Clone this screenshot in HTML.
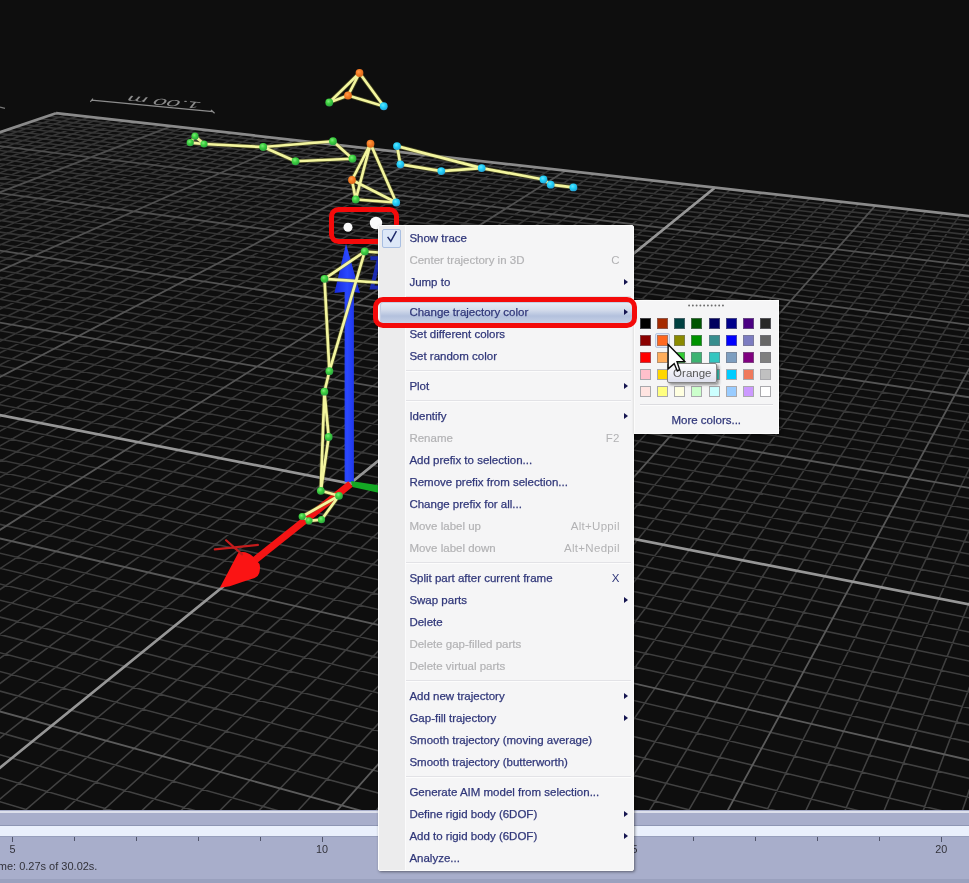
<!DOCTYPE html>
<html><head><meta charset="utf-8"><title>Trajectory menu</title>
<style>
html,body{margin:0;padding:0;background:#0e0e0e;}
body{width:969px;height:883px;position:relative;overflow:hidden;font-family:"Liberation Sans",sans-serif;}
#view{position:absolute;left:0;top:0;width:969px;height:810px;background:#0e0e0e;overflow:hidden;}
#view svg{position:absolute;left:0;top:0;}
#timeline{position:absolute;left:0;top:810px;width:969px;height:73px;background:#a8aecb;}
#timeline .topl{position:absolute;left:0;top:0.5px;width:969px;height:2px;background:#dcdfeb;}
#timeline .track{position:absolute;left:0;top:15px;width:969px;height:10px;background:#eaf0fc;border-top:1px solid #8e96b4;border-bottom:1px solid #979fbc;box-sizing:content-box;}
#timeline .tick{position:absolute;top:26.5px;width:1px;height:4px;background:#50546a;}
#timeline .tick.big{height:5px;}
#timeline .lab{position:absolute;top:32px;width:30px;margin-left:-15px;text-align:center;font-size:10.8px;color:#32323a;line-height:14px;}
#timeline .status{position:absolute;left:-11px;top:49px;font-size:11px;color:#32323a;line-height:14px;white-space:nowrap;}
#timeline .bot{position:absolute;left:0;top:69px;width:969px;height:4px;background:#9aa1be;}
#menu{position:absolute;left:377.6px;top:225px;width:256.2px;height:646px;background:#f5f5f6;box-sizing:border-box;border:1px solid #fbfbfb;border-radius:2px;box-shadow:1px 1px 3px rgba(0,0,0,.45);}
#menu .gutter{position:absolute;left:0;top:0;width:26px;height:100%;background:#ececed;border-right:1px solid #fbfbfc;}
#menu .it,#menu .sc,#timeline .lab,#timeline .status,.gs{opacity:.995;}
#menu .it{position:absolute;left:30.8px;font-size:11.5px;color:#30377a;-webkit-text-stroke:0.25px #30377a;line-height:22px;height:22px;white-space:nowrap;}
#menu .it.dis{color:#b3b3b5;-webkit-text-stroke:0.2px #b3b3b5;}
#menu .sc{position:absolute;right:13px;letter-spacing:0.3px;font-size:11.5px;color:#30377a;line-height:22px;height:22px;white-space:nowrap;text-align:right;}
#menu .sc.dis{color:#b3b3b5;}
#menu .arr{position:absolute;left:245.6px;width:0;height:0;border-left:4px solid #15154f;border-top:3.5px solid transparent;border-bottom:3.5px solid transparent;}
#menu .sep{position:absolute;left:27px;right:2px;height:1px;background:#e2e2e6;border-bottom:1px solid #fcfcfc;}
#menu .hl{position:absolute;left:1px;top:76px;width:253px;height:22px;border-radius:3px;background:linear-gradient(#e6ebf5 0%,#d3dbeb 35%,#b3c1dd 65%,#c6d0e6 100%);border:1px solid #c3cde3;box-sizing:border-box;}
#menu .chk{position:absolute;left:3px;top:3px;width:19px;height:19px;box-sizing:border-box;background:#dde8f8;border:1px solid #a9bfe2;border-radius:2px;}
</style></head><body>
<div id="view">
<svg class="grid" width="969" height="810" viewBox="0 0 969 810" style="filter:blur(0.62px)">
<defs>
<linearGradient id="gmin" gradientUnits="userSpaceOnUse" x1="0" y1="110" x2="0" y2="810"><stop offset="0" stop-color="#353535"/><stop offset="0.3" stop-color="#353535"/><stop offset="1" stop-color="#424242"/></linearGradient>
<linearGradient id="gmaj" gradientUnits="userSpaceOnUse" x1="0" y1="110" x2="0" y2="810"><stop offset="0" stop-color="#4c4c4c"/><stop offset="0.3" stop-color="#545454"/><stop offset="1" stop-color="#5c5c5c"/></linearGradient>
</defs>
<path d="M67.2 114.5 L-2057.7 846.7 M47.9 116.0 L1654.7 298.7 M78.6 115.7 L-2044.3 855.9 M39.7 118.8 L1657.5 304.3 M89.9 117.0 L-2030.8 865.3 M31.4 121.6 L1660.3 310.1 M101.4 118.3 L-2017.0 874.8 M23.0 124.4 L1663.1 315.9 M112.9 119.6 L-2003.1 884.5 M14.4 127.3 L1666.0 321.9 M124.5 120.9 L-1988.9 894.4 M5.8 130.3 L1669.0 327.9 M136.2 122.3 L-1974.4 904.4 M-2.9 133.3 L1672.0 334.1 M148.0 123.6 L-1959.7 914.6 M-11.8 136.3 L1675.0 340.4 M159.8 124.9 L-1944.8 925.0 M-20.7 139.3 L1678.1 346.8 M183.6 127.6 L-1914.2 946.2 M-39.0 145.6 L1684.6 360.0 M195.7 129.0 L-1898.5 957.1 M-48.4 148.7 L1687.9 366.8 M207.8 130.3 L-1882.5 968.2 M-57.8 152.0 L1691.3 373.8 M220.0 131.7 L-1866.2 979.5 M-67.4 155.2 L1694.7 380.8 M232.2 133.1 L-1849.7 991.0 M-77.1 158.5 L1698.2 388.0 M244.5 134.5 L-1832.8 1002.7 M-87.0 161.9 L1701.8 395.4 M257.0 135.9 L-1815.6 1014.6 M-97.0 165.3 L1705.5 402.9 M269.5 137.3 L-1798.2 1026.7 M-107.1 168.7 L1709.2 410.6 M282.0 138.7 L-1780.4 1039.1 M-117.4 172.2 L1713.0 418.4 M307.4 141.6 L-1743.8 1064.5 M-138.3 179.4 L1720.9 434.6 M320.2 143.0 L-1725.0 1077.5 M-149.1 183.0 L1725.0 443.0 M333.1 144.5 L-1705.8 1090.8 M-159.9 186.7 L1729.1 451.5 M346.1 145.9 L-1686.2 1104.4 M-171.0 190.5 L1733.4 460.3 M359.1 147.4 L-1666.3 1118.2 M-182.2 194.3 L1737.7 469.2 M372.3 148.9 L-1646.0 1132.3 M-193.5 198.2 L1742.2 478.4 M385.5 150.4 L-1625.3 1146.7 M-205.1 202.1 L1746.7 487.7 M398.8 151.9 L-1604.1 1161.4 M-216.8 206.1 L1751.4 497.3 M412.2 153.4 L-1582.6 1176.3 M-228.7 210.1 L1756.2 507.1 M439.2 156.4 L-1538.1 1207.2 M-253.0 218.4 L1766.1 527.4 M452.9 158.0 L-1515.1 1223.1 M-265.4 222.7 L1771.2 538.0 M466.7 159.5 L-1491.7 1239.4 M-278.0 227.0 L1776.4 548.8 M480.5 161.1 L-1467.8 1256.0 M-290.9 231.3 L1781.8 559.8 M494.4 162.6 L-1443.3 1272.9 M-303.9 235.8 L1787.4 571.2 M508.5 164.2 L-1418.4 1290.3 M-317.2 240.3 L1793.0 582.8 M522.6 165.8 L-1392.8 1308.0 M-330.6 244.9 L1798.8 594.8 M536.8 167.4 L-1366.7 1326.1 M-344.3 249.5 L1804.8 607.1 M551.1 169.0 L-1340.1 1344.6 M-358.2 254.3 L1811.0 619.7 M580.0 172.3 L-1284.8 1382.9 M-386.7 264.0 L1823.7 645.9 M594.6 173.9 L-1256.3 1402.7 M-401.3 269.0 L1830.4 659.6 M609.3 175.6 L-1227.0 1423.0 M-416.2 274.0 L1837.3 673.7 M624.1 177.3 L-1197.0 1443.8 M-431.3 279.2 L1844.3 688.2 M639.0 178.9 L-1166.4 1465.1 M-446.7 284.4 L1851.6 703.1 M654.0 180.6 L-1134.9 1486.9 M-462.3 289.7 L1859.0 718.4 M669.1 182.3 L-1102.7 1509.3 M-478.2 295.2 L1866.7 734.2 M684.3 184.1 L-1069.7 1532.2 M-494.4 300.7 L1874.7 750.5 M699.6 185.8 L-1035.8 1555.7 M-510.9 306.3 L1882.8 767.3 M730.6 189.3 L-965.4 1604.5 M-544.8 317.8 L1900.0 802.6 M746.2 191.0 L-928.9 1629.9 M-562.2 323.8 L1909.0 821.1 M762.0 192.8 L-891.3 1656.0 M-580.0 329.8 L1918.3 840.2 M777.8 194.6 L-852.7 1682.8 M-598.0 335.9 L1927.9 859.9 M793.8 196.4 L-813.0 1710.3 M-616.4 342.2 L1937.8 880.3 M809.9 198.2 L-772.3 1738.6 M-635.2 348.6 L1948.1 901.5 M826.1 200.0 L-730.3 1767.7 M-654.3 355.1 L1958.8 923.3 M842.4 201.9 L-687.2 1797.6 M-673.8 361.8 L1969.8 946.0 M858.9 203.7 L-642.8 1828.4 M-693.7 368.5 L1981.3 969.6 M892.1 207.5 L-550.1 1892.8 M-734.6 382.5 L2005.5 1019.3 M908.9 209.4 L-501.6 1926.4 M-755.7 389.6 L2018.3 1045.6 M925.8 211.3 L-451.5 1961.1 M-777.2 397.0 L2031.6 1073.0 M942.8 213.2 L-400.0 1996.9 M-799.2 404.5 L2045.5 1101.5 M960.0 215.1 L-346.7 2033.9 M-821.6 412.1 L2060.0 1131.2 M977.3 217.1 L-291.8 2072.0 M-844.5 419.9 L2075.0 1162.2 M994.7 219.1 L-235.0 2111.4 M-867.9 427.9 L2090.7 1194.4 M1012.3 221.0 L-176.3 2152.1 M-891.8 436.0 L2107.2 1228.2 M1030.0 223.0 L-115.6 2194.3 M-916.2 444.3 L2124.3 1263.4 M1065.7 227.1 L12.2 2283.0 M-966.6 461.5 L2161.1 1338.9 M1083.8 229.1 L79.6 2329.7 M-992.7 470.4 L2180.8 1379.4 M1102.0 231.2 L149.4 2378.2 M-1019.3 479.5 L2201.5 1421.9 M1120.4 233.2 L221.9 2428.4 M-1046.6 488.7 L2223.2 1466.6 M1138.9 235.3 L297.1 2480.6 M-1074.5 498.3 L2246.1 1513.7 M1157.5 237.4 L375.2 2534.8 M-1103.1 508.0 L2270.3 1563.2 M1176.3 239.5 L456.4 2591.1 M-1132.4 517.9 L2295.7 1615.5 M1195.2 241.7 L540.9 2649.8 M-1162.3 528.2 L2322.6 1670.8 M1214.3 243.8 L628.8 2710.8 M-1193.0 538.6 L2351.1 1729.4 M1252.9 248.2 L816.1 2840.8 M-1256.7 560.3 L2413.4 1857.3 M1272.4 250.4 L915.9 2910.0 M-1289.8 571.6 L2447.6 1927.5 M1292.1 252.6 L1020.2 2982.4 M-1323.7 583.1 L2484.0 2002.3 M1311.9 254.8 L1129.2 3058.0 M-1358.5 595.0 L2522.9 2082.3 M1331.9 257.1 L1243.4 3137.3 M-1394.2 607.1 L2564.6 2167.9 M1352.1 259.4 L1363.1 3220.3 M-1430.9 619.6 L2609.3 2259.8 M1372.4 261.6 L1488.7 3307.5 M-1468.5 632.4 L2657.5 2358.8 M1392.9 264.0 L1620.6 3399.0 M-1507.2 645.6 L2709.5 2465.7 M1413.5 266.3 L1759.4 3495.3 M-1547.0 659.2 L2765.9 2581.4 M1455.3 271.0 L2059.8 3703.8 M-1630.0 687.4 L2893.8 2844.1 M1476.4 273.4 L2222.6 3816.8 M-1673.3 702.2 L2966.8 2994.1 M1497.8 275.8 L2394.9 3936.3 M-1717.8 717.3 L3047.0 3159.0 M1519.3 278.2 L2577.5 4063.0 M-1763.7 733.0 L3135.7 3341.2 M1540.9 280.6 L2771.2 4197.4 M-1811.0 749.1 L3234.1 3543.4 M1562.8 283.1 L2977.3 4340.4 M-1859.7 765.7 L3344.1 3769.2 M1584.8 285.6 L3196.8 4492.7 M-1910.0 782.8 L3467.6 4023.0 M1607.0 288.1 L3431.2 4655.4 M-1961.9 800.5 L3607.5 4310.3 M1629.4 290.6 L3682.0 4829.4 M-2015.4 818.7 L3767.1 4638.2" stroke="url(#gmin)" stroke-width="1.55" fill="none"/>
<path d="M171.7 126.2 L-1929.6 935.5 M-29.8 142.4 L1681.3 353.4 M294.7 140.1 L-1762.2 1051.6 M-127.8 175.8 L1716.9 426.5 M425.7 154.9 L-1560.5 1191.6 M-240.7 214.2 L1761.0 517.1 M565.5 170.7 L-1312.8 1363.5 M-372.3 259.1 L1817.3 632.6 M875.4 205.6 L-597.1 1860.1 M-713.9 375.4 L1993.2 994.0 M1047.8 225.0 L-52.8 2237.8 M-941.1 452.8 L2142.3 1300.3 M1233.5 246.0 L720.5 2774.4 M-1224.5 549.3 L2381.3 1791.4 M1434.3 268.6 L1905.6 3596.8 M-1587.9 673.1 L2827.0 2707.0" stroke="url(#gmaj)" stroke-width="1.8" fill="none"/>
<path d="M715.1 187.5 L-1001.1 1579.8 M-527.7 312.0 L1891.3 784.7" stroke="#969696" stroke-width="2.7" fill="none"/>
<path d="M56.0 113.2 L-2070.8 837.6 M56.0 113.2 L1652.0 293.2 M1652.0 293.2 L3951.0 5016.1 M-2070.8 837.6 L3951.0 5016.1" stroke="#8a8a8a" stroke-width="2.7" fill="none"/>
</svg>
<svg width="969" height="810" viewBox="0 0 969 810">
<defs>
<radialGradient id="rgo" cx="0.4" cy="0.35" r="0.7"><stop offset="0" stop-color="#ff9c4c"/><stop offset="0.45" stop-color="#f57c24"/><stop offset="1" stop-color="#d4651c"/></radialGradient>
<radialGradient id="rgg" cx="0.4" cy="0.35" r="0.7"><stop offset="0" stop-color="#7cec7c"/><stop offset="0.45" stop-color="#3dd03d"/><stop offset="1" stop-color="#2a9c42"/></radialGradient>
<radialGradient id="rgc" cx="0.4" cy="0.35" r="0.7"><stop offset="0" stop-color="#66e4ff"/><stop offset="0.45" stop-color="#1fd0f8"/><stop offset="1" stop-color="#279cd0"/></radialGradient>
<linearGradient id="zb" x1="0" x2="1" y1="0" y2="0"><stop offset="0" stop-color="#1528d8"/><stop offset="0.5" stop-color="#2a48ff"/><stop offset="1" stop-color="#1528d8"/></linearGradient>
</defs>
<g stroke="#8c8c8c" stroke-width="1.2" fill="none"><path d="M91.5 100.2 L212.9 111.7 M90.3 101.8 L93 98.6 M211 110 L214.6 113.2"/></g>
<text transform="translate(202.5 102.6) rotate(185.4) scale(1 0.39) skewX(-15)" font-family="Liberation Sans, sans-serif" font-size="24" fill="#8c8c8c" opacity="0.99">1.00 m</text>
<path d="M0 107.2 L5 108.3" stroke="#777" stroke-width="1.2"/>
<path d="M344.6 482 L344.6 292 L334.4 293 L346 243.8 L360 293 L353.9 292 L353.9 482 Z" fill="url(#zb)"/>
<path d="M370.3 258.2 L379 258.2 L372 287.5 L381 287.5" stroke="#1b2cc2" stroke-width="4" fill="none" opacity="0.9"/>
<path d="M351 481 L400 488.4 L400 497.4 L352.3 487 Z" fill="#14a824"/>
<path d="M348.3 481.2 L352.7 486.8 L254.2 565.3 L249.8 559.7 Z" fill="#f41414"/>
<path d="M238 553.2 L219.9 587.8 L229.8 586.2 L242.2 582 L254.6 577.9 Q258.5 576 259.3 572.9 Q260.6 568 259.5 564 L253 556.5 Q245 549.5 238 553.2 Z" fill="#fb1414"/>
<g stroke="#c41c1c" stroke-width="2.2" fill="none" stroke-linecap="round"><path d="M214.8 549.4 L257.9 544.9 M226.1 540.3 L242 554.4"/></g>
<g stroke="#7a7a30" stroke-width="4.2" stroke-linecap="round" fill="none" opacity="0.5">
<path d="M359.5 73 L329.25 102.5"/>
<path d="M359.5 73 L348 95.5"/>
<path d="M359.5 73 L383.75 106.25"/>
<path d="M329.25 102.5 L348 95.5"/>
<path d="M348 95.5 L383.75 106.25"/>
<path d="M195 136.2 L204 144"/>
<path d="M190.2 142.7 L204 144"/>
<path d="M195 136.2 L190.2 142.7"/>
<path d="M204 144 L263.25 147"/>
<path d="M263.25 147 L333 141.25"/>
<path d="M263.25 147 L295.5 161.25"/>
<path d="M295.5 161.25 L352.5 158.75"/>
<path d="M333 141.25 L352.5 158.75"/>
<path d="M370.5 143.75 L352 180"/>
<path d="M370.5 143.75 L355.75 199.5"/>
<path d="M370.5 143.75 L396.25 202.5"/>
<path d="M352 180 L396.25 202.5"/>
<path d="M355.75 199.5 L396.25 202.5"/>
<path d="M352 180 L355.75 199.5"/>
<path d="M397 146.1 L481.7 168.1"/>
<path d="M397 146.1 L400.4 164.3"/>
<path d="M400.4 164.3 L441.3 171.1"/>
<path d="M441.3 171.1 L481.7 168.1"/>
<path d="M481.7 168.1 L543.5 179.5"/>
<path d="M543.5 179.5 L550.7 184.7"/>
<path d="M550.7 184.7 L573.4 187.4"/>
<path d="M364.8 251.5 L324.5 278.8"/>
<path d="M324.5 278.8 L400 284"/>
<path d="M364.8 251.5 L400 254"/>
<path d="M364.8 251.5 L329.4 371.2"/>
<path d="M324.5 278.8 L329.4 371.2"/>
<path d="M329.4 371.2 L324.4 391.7"/>
<path d="M324.4 391.7 L320.8 490.8"/>
<path d="M324.4 391.7 L328.7 437"/>
<path d="M328.7 437 L320.8 490.8"/>
<path d="M320.8 490.8 L339 495.8"/>
<path d="M339 495.8 L302.2 516.5"/>
<path d="M339 495.8 L321.5 519.7"/>
<path d="M302.2 516.5 L309 520.8"/>
<path d="M309 520.8 L321.5 519.7"/>
</g>
<g stroke="#f3f59e" stroke-width="2.7" stroke-linecap="round" fill="none">
<path d="M359.5 73 L329.25 102.5"/>
<path d="M359.5 73 L348 95.5"/>
<path d="M359.5 73 L383.75 106.25"/>
<path d="M329.25 102.5 L348 95.5"/>
<path d="M348 95.5 L383.75 106.25"/>
<path d="M195 136.2 L204 144"/>
<path d="M190.2 142.7 L204 144"/>
<path d="M195 136.2 L190.2 142.7"/>
<path d="M204 144 L263.25 147"/>
<path d="M263.25 147 L333 141.25"/>
<path d="M263.25 147 L295.5 161.25"/>
<path d="M295.5 161.25 L352.5 158.75"/>
<path d="M333 141.25 L352.5 158.75"/>
<path d="M370.5 143.75 L352 180"/>
<path d="M370.5 143.75 L355.75 199.5"/>
<path d="M370.5 143.75 L396.25 202.5"/>
<path d="M352 180 L396.25 202.5"/>
<path d="M355.75 199.5 L396.25 202.5"/>
<path d="M352 180 L355.75 199.5"/>
<path d="M397 146.1 L481.7 168.1"/>
<path d="M397 146.1 L400.4 164.3"/>
<path d="M400.4 164.3 L441.3 171.1"/>
<path d="M441.3 171.1 L481.7 168.1"/>
<path d="M481.7 168.1 L543.5 179.5"/>
<path d="M543.5 179.5 L550.7 184.7"/>
<path d="M550.7 184.7 L573.4 187.4"/>
<path d="M364.8 251.5 L324.5 278.8"/>
<path d="M324.5 278.8 L400 284"/>
<path d="M364.8 251.5 L400 254"/>
<path d="M364.8 251.5 L329.4 371.2"/>
<path d="M324.5 278.8 L329.4 371.2"/>
<path d="M329.4 371.2 L324.4 391.7"/>
<path d="M324.4 391.7 L320.8 490.8"/>
<path d="M324.4 391.7 L328.7 437"/>
<path d="M328.7 437 L320.8 490.8"/>
<path d="M320.8 490.8 L339 495.8"/>
<path d="M339 495.8 L302.2 516.5"/>
<path d="M339 495.8 L321.5 519.7"/>
<path d="M302.2 516.5 L309 520.8"/>
<path d="M309 520.8 L321.5 519.7"/>
</g>
<circle cx="359.5" cy="73" r="3.9" fill="url(#rgo)"/>
<circle cx="348" cy="95.5" r="3.9" fill="url(#rgo)"/>
<circle cx="329.25" cy="102.5" r="3.9" fill="url(#rgg)"/>
<circle cx="383.75" cy="106.25" r="3.9" fill="url(#rgc)"/>
<circle cx="195" cy="136.2" r="3.6" fill="url(#rgg)"/>
<circle cx="190.2" cy="142.7" r="3.6" fill="url(#rgg)"/>
<circle cx="204" cy="144" r="3.6" fill="url(#rgg)"/>
<circle cx="263.25" cy="147" r="3.9" fill="url(#rgg)"/>
<circle cx="295.5" cy="161.25" r="3.9" fill="url(#rgg)"/>
<circle cx="333" cy="141.25" r="3.9" fill="url(#rgg)"/>
<circle cx="352.5" cy="158.75" r="3.9" fill="url(#rgg)"/>
<circle cx="370.5" cy="143.75" r="3.9" fill="url(#rgo)"/>
<circle cx="352" cy="180" r="3.9" fill="url(#rgo)"/>
<circle cx="355.75" cy="199.5" r="3.9" fill="url(#rgg)"/>
<circle cx="396.25" cy="202.5" r="3.9" fill="url(#rgc)"/>
<circle cx="397" cy="146.1" r="3.9" fill="url(#rgc)"/>
<circle cx="400.4" cy="164.3" r="3.9" fill="url(#rgc)"/>
<circle cx="441.3" cy="171.1" r="3.9" fill="url(#rgc)"/>
<circle cx="481.7" cy="168.1" r="3.9" fill="url(#rgc)"/>
<circle cx="543.5" cy="179.5" r="3.9" fill="url(#rgc)"/>
<circle cx="550.7" cy="184.7" r="3.9" fill="url(#rgc)"/>
<circle cx="573.4" cy="187.4" r="3.9" fill="url(#rgc)"/>
<circle cx="364.8" cy="251.5" r="3.9" fill="url(#rgg)"/>
<circle cx="324.5" cy="278.8" r="3.9" fill="url(#rgg)"/>
<circle cx="329.4" cy="371.2" r="3.9" fill="url(#rgg)"/>
<circle cx="324.4" cy="391.7" r="3.9" fill="url(#rgg)"/>
<circle cx="328.7" cy="437" r="3.9" fill="url(#rgg)"/>
<circle cx="320.8" cy="490.8" r="3.9" fill="url(#rgg)"/>
<circle cx="339" cy="495.8" r="3.9" fill="url(#rgg)"/>
<circle cx="302.2" cy="516.5" r="3.6" fill="url(#rgg)"/>
<circle cx="309" cy="520.8" r="3.6" fill="url(#rgg)"/>
<circle cx="321.5" cy="519.7" r="3.6" fill="url(#rgg)"/>
<circle cx="348" cy="227.2" r="4.5" fill="#fafafa"/><circle cx="376" cy="223" r="6.2" fill="#fafafa"/>
</svg>
</div>
<div id="timeline">
<div class="topl"></div><div class="track"></div><div class="bot"></div>
<div class="tick big" style="left:11.9px"></div>
<div class="lab" style="left:12.4px">5</div>
<div class="tick" style="left:73.8px"></div>
<div class="tick" style="left:135.7px"></div>
<div class="tick" style="left:197.7px"></div>
<div class="tick" style="left:259.6px"></div>
<div class="tick big" style="left:321.5px"></div>
<div class="lab" style="left:322.0px">10</div>
<div class="tick" style="left:383.4px"></div>
<div class="tick" style="left:445.3px"></div>
<div class="tick" style="left:507.3px"></div>
<div class="tick" style="left:569.2px"></div>
<div class="tick big" style="left:631.1px"></div>
<div class="lab" style="left:631.6px">15</div>
<div class="tick" style="left:693.0px"></div>
<div class="tick" style="left:754.9px"></div>
<div class="tick" style="left:816.9px"></div>
<div class="tick" style="left:878.8px"></div>
<div class="tick big" style="left:940.7px"></div>
<div class="lab" style="left:941.2px">20</div>
<div class="status">Time: 0.27s of 30.02s.</div>
</div>
<div style="position:absolute;left:329px;top:207px;width:70px;height:37px;box-sizing:border-box;border:5.6px solid #f40a0a;border-radius:9.5px;"></div>
<div id="red2" style="position:absolute;left:373px;top:297px;width:264px;height:31px;box-sizing:border-box;border:5px solid #f40a0a;border-radius:10px;z-index:5;"></div>
<div id="menu">
<div class="gutter"></div>
<div class="hl"></div>
<div class="chk"><svg width="17" height="17" viewBox="0 0 17 17"><path d="M4.6 6.9 L7.8 11.3 L13.4 1.2" stroke="#1f2a6a" stroke-width="1.45" fill="none"/></svg></div>
<div class="it" style="top:1px">Show trace</div>
<div class="it dis" style="top:23px">Center trajectory in 3D</div>
<div class="sc dis" style="top:23px">C</div>
<div class="it" style="top:45px">Jump to</div>
<div class="arr" style="top:52.5px"></div>
<div class="it" style="top:75px">Change trajectory color</div>
<div class="arr" style="top:82.5px"></div>
<div class="it" style="top:97px">Set different colors</div>
<div class="it" style="top:119px">Set random color</div>
<div class="it" style="top:149px">Plot</div>
<div class="arr" style="top:156.5px"></div>
<div class="it" style="top:179px">Identify</div>
<div class="arr" style="top:186.5px"></div>
<div class="it dis" style="top:201px">Rename</div>
<div class="sc dis" style="top:201px">F2</div>
<div class="it" style="top:223px">Add prefix to selection...</div>
<div class="it" style="top:245px">Remove prefix from selection...</div>
<div class="it" style="top:267px">Change prefix for all...</div>
<div class="it dis" style="top:289px">Move label up</div>
<div class="sc dis" style="top:289px">Alt+Uppil</div>
<div class="it dis" style="top:311px">Move label down</div>
<div class="sc dis" style="top:311px">Alt+Nedpil</div>
<div class="it" style="top:341px">Split part after current frame</div>
<div class="sc" style="top:341px">X</div>
<div class="it" style="top:363px">Swap parts</div>
<div class="arr" style="top:370.5px"></div>
<div class="it" style="top:385px">Delete</div>
<div class="it dis" style="top:407px">Delete gap-filled parts</div>
<div class="it dis" style="top:429px">Delete virtual parts</div>
<div class="it" style="top:459px">Add new trajectory</div>
<div class="arr" style="top:466.5px"></div>
<div class="it" style="top:481px">Gap-fill trajectory</div>
<div class="arr" style="top:488.5px"></div>
<div class="it" style="top:503px">Smooth trajectory (moving average)</div>
<div class="it" style="top:525px">Smooth trajectory (butterworth)</div>
<div class="it" style="top:555px">Generate AIM model from selection...</div>
<div class="it" style="top:577px">Define rigid body (6DOF)</div>
<div class="arr" style="top:584.5px"></div>
<div class="it" style="top:599px">Add to rigid body (6DOF)</div>
<div class="arr" style="top:606.5px"></div>
<div class="it" style="top:621px">Analyze...</div>
<div class="sep" style="top:70px"></div>
<div class="sep" style="top:144px"></div>
<div class="sep" style="top:174px"></div>
<div class="sep" style="top:336px"></div>
<div class="sep" style="top:454px"></div>
<div class="sep" style="top:550px"></div>
</div>
<div id="pal" style="position:absolute;left:633.5px;top:299.5px;width:145.5px;height:134.5px;background:#f5f5f6;box-sizing:border-box;border:1px solid #fcfcfc;box-shadow:1px 1px 3px rgba(0,0,0,.5);z-index:3;">
<svg style="position:absolute;left:0;top:0" width="143" height="12" fill="#6c6c6c"><circle cx="54.10" cy="4.50" r="0.95"/><circle cx="57.86" cy="4.50" r="0.95"/><circle cx="61.62" cy="4.50" r="0.95"/><circle cx="65.38" cy="4.50" r="0.95"/><circle cx="69.14" cy="4.50" r="0.95"/><circle cx="72.90" cy="4.50" r="0.95"/><circle cx="76.66" cy="4.50" r="0.95"/><circle cx="80.42" cy="4.50" r="0.95"/><circle cx="84.18" cy="4.50" r="0.95"/><circle cx="87.94" cy="4.50" r="0.95"/></svg>
<div style="position:absolute;left:5.90px;top:17.00px;width:11px;height:11px;box-sizing:border-box;background:#000000;border:1px solid rgba(120,120,130,.55);"></div>
<div style="position:absolute;left:22.93px;top:17.00px;width:11px;height:11px;box-sizing:border-box;background:#A52A00;border:1px solid rgba(120,120,130,.55);"></div>
<div style="position:absolute;left:39.96px;top:17.00px;width:11px;height:11px;box-sizing:border-box;background:#004040;border:1px solid rgba(120,120,130,.55);"></div>
<div style="position:absolute;left:56.99px;top:17.00px;width:11px;height:11px;box-sizing:border-box;background:#005500;border:1px solid rgba(120,120,130,.55);"></div>
<div style="position:absolute;left:74.02px;top:17.00px;width:11px;height:11px;box-sizing:border-box;background:#00005E;border:1px solid rgba(120,120,130,.55);"></div>
<div style="position:absolute;left:91.05px;top:17.00px;width:11px;height:11px;box-sizing:border-box;background:#00008B;border:1px solid rgba(120,120,130,.55);"></div>
<div style="position:absolute;left:108.08px;top:17.00px;width:11px;height:11px;box-sizing:border-box;background:#4B0082;border:1px solid rgba(120,120,130,.55);"></div>
<div style="position:absolute;left:125.11px;top:17.00px;width:11px;height:11px;box-sizing:border-box;background:#282828;border:1px solid rgba(120,120,130,.55);"></div>
<div style="position:absolute;left:5.90px;top:34.03px;width:11px;height:11px;box-sizing:border-box;background:#8B0000;border:1px solid rgba(120,120,130,.55);"></div>
<div style="position:absolute;left:20.93px;top:32.03px;width:15px;height:15px;box-sizing:border-box;background:#dfe7f5;border:1px solid #b9c8e4;border-radius:2px;"></div>
<div style="position:absolute;left:22.93px;top:34.03px;width:11px;height:11px;box-sizing:border-box;background:#FF6820;border:1px solid rgba(120,120,130,.55);"></div>
<div style="position:absolute;left:39.96px;top:34.03px;width:11px;height:11px;box-sizing:border-box;background:#8B8B00;border:1px solid rgba(120,120,130,.55);"></div>
<div style="position:absolute;left:56.99px;top:34.03px;width:11px;height:11px;box-sizing:border-box;background:#009300;border:1px solid rgba(120,120,130,.55);"></div>
<div style="position:absolute;left:74.02px;top:34.03px;width:11px;height:11px;box-sizing:border-box;background:#388E8E;border:1px solid rgba(120,120,130,.55);"></div>
<div style="position:absolute;left:91.05px;top:34.03px;width:11px;height:11px;box-sizing:border-box;background:#0000FF;border:1px solid rgba(120,120,130,.55);"></div>
<div style="position:absolute;left:108.08px;top:34.03px;width:11px;height:11px;box-sizing:border-box;background:#7B7BC0;border:1px solid rgba(120,120,130,.55);"></div>
<div style="position:absolute;left:125.11px;top:34.03px;width:11px;height:11px;box-sizing:border-box;background:#666666;border:1px solid rgba(120,120,130,.55);"></div>
<div style="position:absolute;left:5.90px;top:51.06px;width:11px;height:11px;box-sizing:border-box;background:#FF0000;border:1px solid rgba(120,120,130,.55);"></div>
<div style="position:absolute;left:22.93px;top:51.06px;width:11px;height:11px;box-sizing:border-box;background:#FFAD5B;border:1px solid rgba(120,120,130,.55);"></div>
<div style="position:absolute;left:39.96px;top:51.06px;width:11px;height:11px;box-sizing:border-box;background:#32CD32;border:1px solid rgba(120,120,130,.55);"></div>
<div style="position:absolute;left:56.99px;top:51.06px;width:11px;height:11px;box-sizing:border-box;background:#3CB371;border:1px solid rgba(120,120,130,.55);"></div>
<div style="position:absolute;left:74.02px;top:51.06px;width:11px;height:11px;box-sizing:border-box;background:#34C6C0;border:1px solid rgba(120,120,130,.55);"></div>
<div style="position:absolute;left:91.05px;top:51.06px;width:11px;height:11px;box-sizing:border-box;background:#7D9EC0;border:1px solid rgba(120,120,130,.55);"></div>
<div style="position:absolute;left:108.08px;top:51.06px;width:11px;height:11px;box-sizing:border-box;background:#800080;border:1px solid rgba(120,120,130,.55);"></div>
<div style="position:absolute;left:125.11px;top:51.06px;width:11px;height:11px;box-sizing:border-box;background:#7F7F7F;border:1px solid rgba(120,120,130,.55);"></div>
<div style="position:absolute;left:5.90px;top:68.09px;width:11px;height:11px;box-sizing:border-box;background:#FFC0CB;border:1px solid #a9a9ad;"></div>
<div style="position:absolute;left:22.93px;top:68.09px;width:11px;height:11px;box-sizing:border-box;background:#FFD700;border:1px solid #a9a9ad;"></div>
<div style="position:absolute;left:39.96px;top:68.09px;width:11px;height:11px;box-sizing:border-box;background:#FFFF00;border:1px solid #a9a9ad;"></div>
<div style="position:absolute;left:56.99px;top:68.09px;width:11px;height:11px;box-sizing:border-box;background:#00FF00;border:1px solid #a9a9ad;"></div>
<div style="position:absolute;left:74.02px;top:68.09px;width:11px;height:11px;box-sizing:border-box;background:#40E0D0;border:1px solid #a9a9ad;"></div>
<div style="position:absolute;left:91.05px;top:68.09px;width:11px;height:11px;box-sizing:border-box;background:#00CCFF;border:1px solid #a9a9ad;"></div>
<div style="position:absolute;left:108.08px;top:68.09px;width:11px;height:11px;box-sizing:border-box;background:#F07A5C;border:1px solid #a9a9ad;"></div>
<div style="position:absolute;left:125.11px;top:68.09px;width:11px;height:11px;box-sizing:border-box;background:#C0C0C0;border:1px solid #a9a9ad;"></div>
<div style="position:absolute;left:5.90px;top:85.12px;width:11px;height:11px;box-sizing:border-box;background:#FFE4E1;border:1px solid #a9a9ad;"></div>
<div style="position:absolute;left:22.93px;top:85.12px;width:11px;height:11px;box-sizing:border-box;background:#FFFF80;border:1px solid #a9a9ad;"></div>
<div style="position:absolute;left:39.96px;top:85.12px;width:11px;height:11px;box-sizing:border-box;background:#FFFFE0;border:1px solid #a9a9ad;"></div>
<div style="position:absolute;left:56.99px;top:85.12px;width:11px;height:11px;box-sizing:border-box;background:#CCFFCC;border:1px solid #a9a9ad;"></div>
<div style="position:absolute;left:74.02px;top:85.12px;width:11px;height:11px;box-sizing:border-box;background:#CCFFFF;border:1px solid #a9a9ad;"></div>
<div style="position:absolute;left:91.05px;top:85.12px;width:11px;height:11px;box-sizing:border-box;background:#99CCFF;border:1px solid #a9a9ad;"></div>
<div style="position:absolute;left:108.08px;top:85.12px;width:11px;height:11px;box-sizing:border-box;background:#CC99FF;border:1px solid #a9a9ad;"></div>
<div style="position:absolute;left:125.11px;top:85.12px;width:11px;height:11px;box-sizing:border-box;background:#FFFFFF;border:1px solid #a9a9ad;"></div>
<div style="position:absolute;left:5px;right:5px;top:103.9px;height:1px;background:#dcdce0;border-bottom:1px solid #fcfcfc"></div>
<div style="position:absolute;left:0;width:100%;top:108.3px;height:22px;line-height:22px;text-align:center;font-size:11.5px;color:#30377a;-webkit-text-stroke:0.25px #30377a;opacity:.995;">More colors...</div>
</div>
<div id="tip" style="position:absolute;left:667.3px;top:363.4px;width:50px;height:20px;box-sizing:border-box;border:1px solid #858585;border-radius:2px;background:linear-gradient(#fdfdfe,#dfe1ef);box-shadow:2px 2px 3px rgba(0,0,0,.4);font-size:11.5px;line-height:18px;text-align:center;color:#575757;z-index:6;"><span style="opacity:.995">Orange</span></div>
<svg id="cur" style="position:absolute;left:664px;top:341px;z-index:7" width="24" height="34" viewBox="0 0 24 34"><path d="M4.1 3.5 L4.1 27.9 L10.2 22.6 L13.3 29.9 L15.6 28.6 L13 20.6 L20.8 20.6 Z" fill="#fff" stroke="#0a0a0a" stroke-width="1.4" stroke-linejoin="miter"/></svg>
</body></html>
